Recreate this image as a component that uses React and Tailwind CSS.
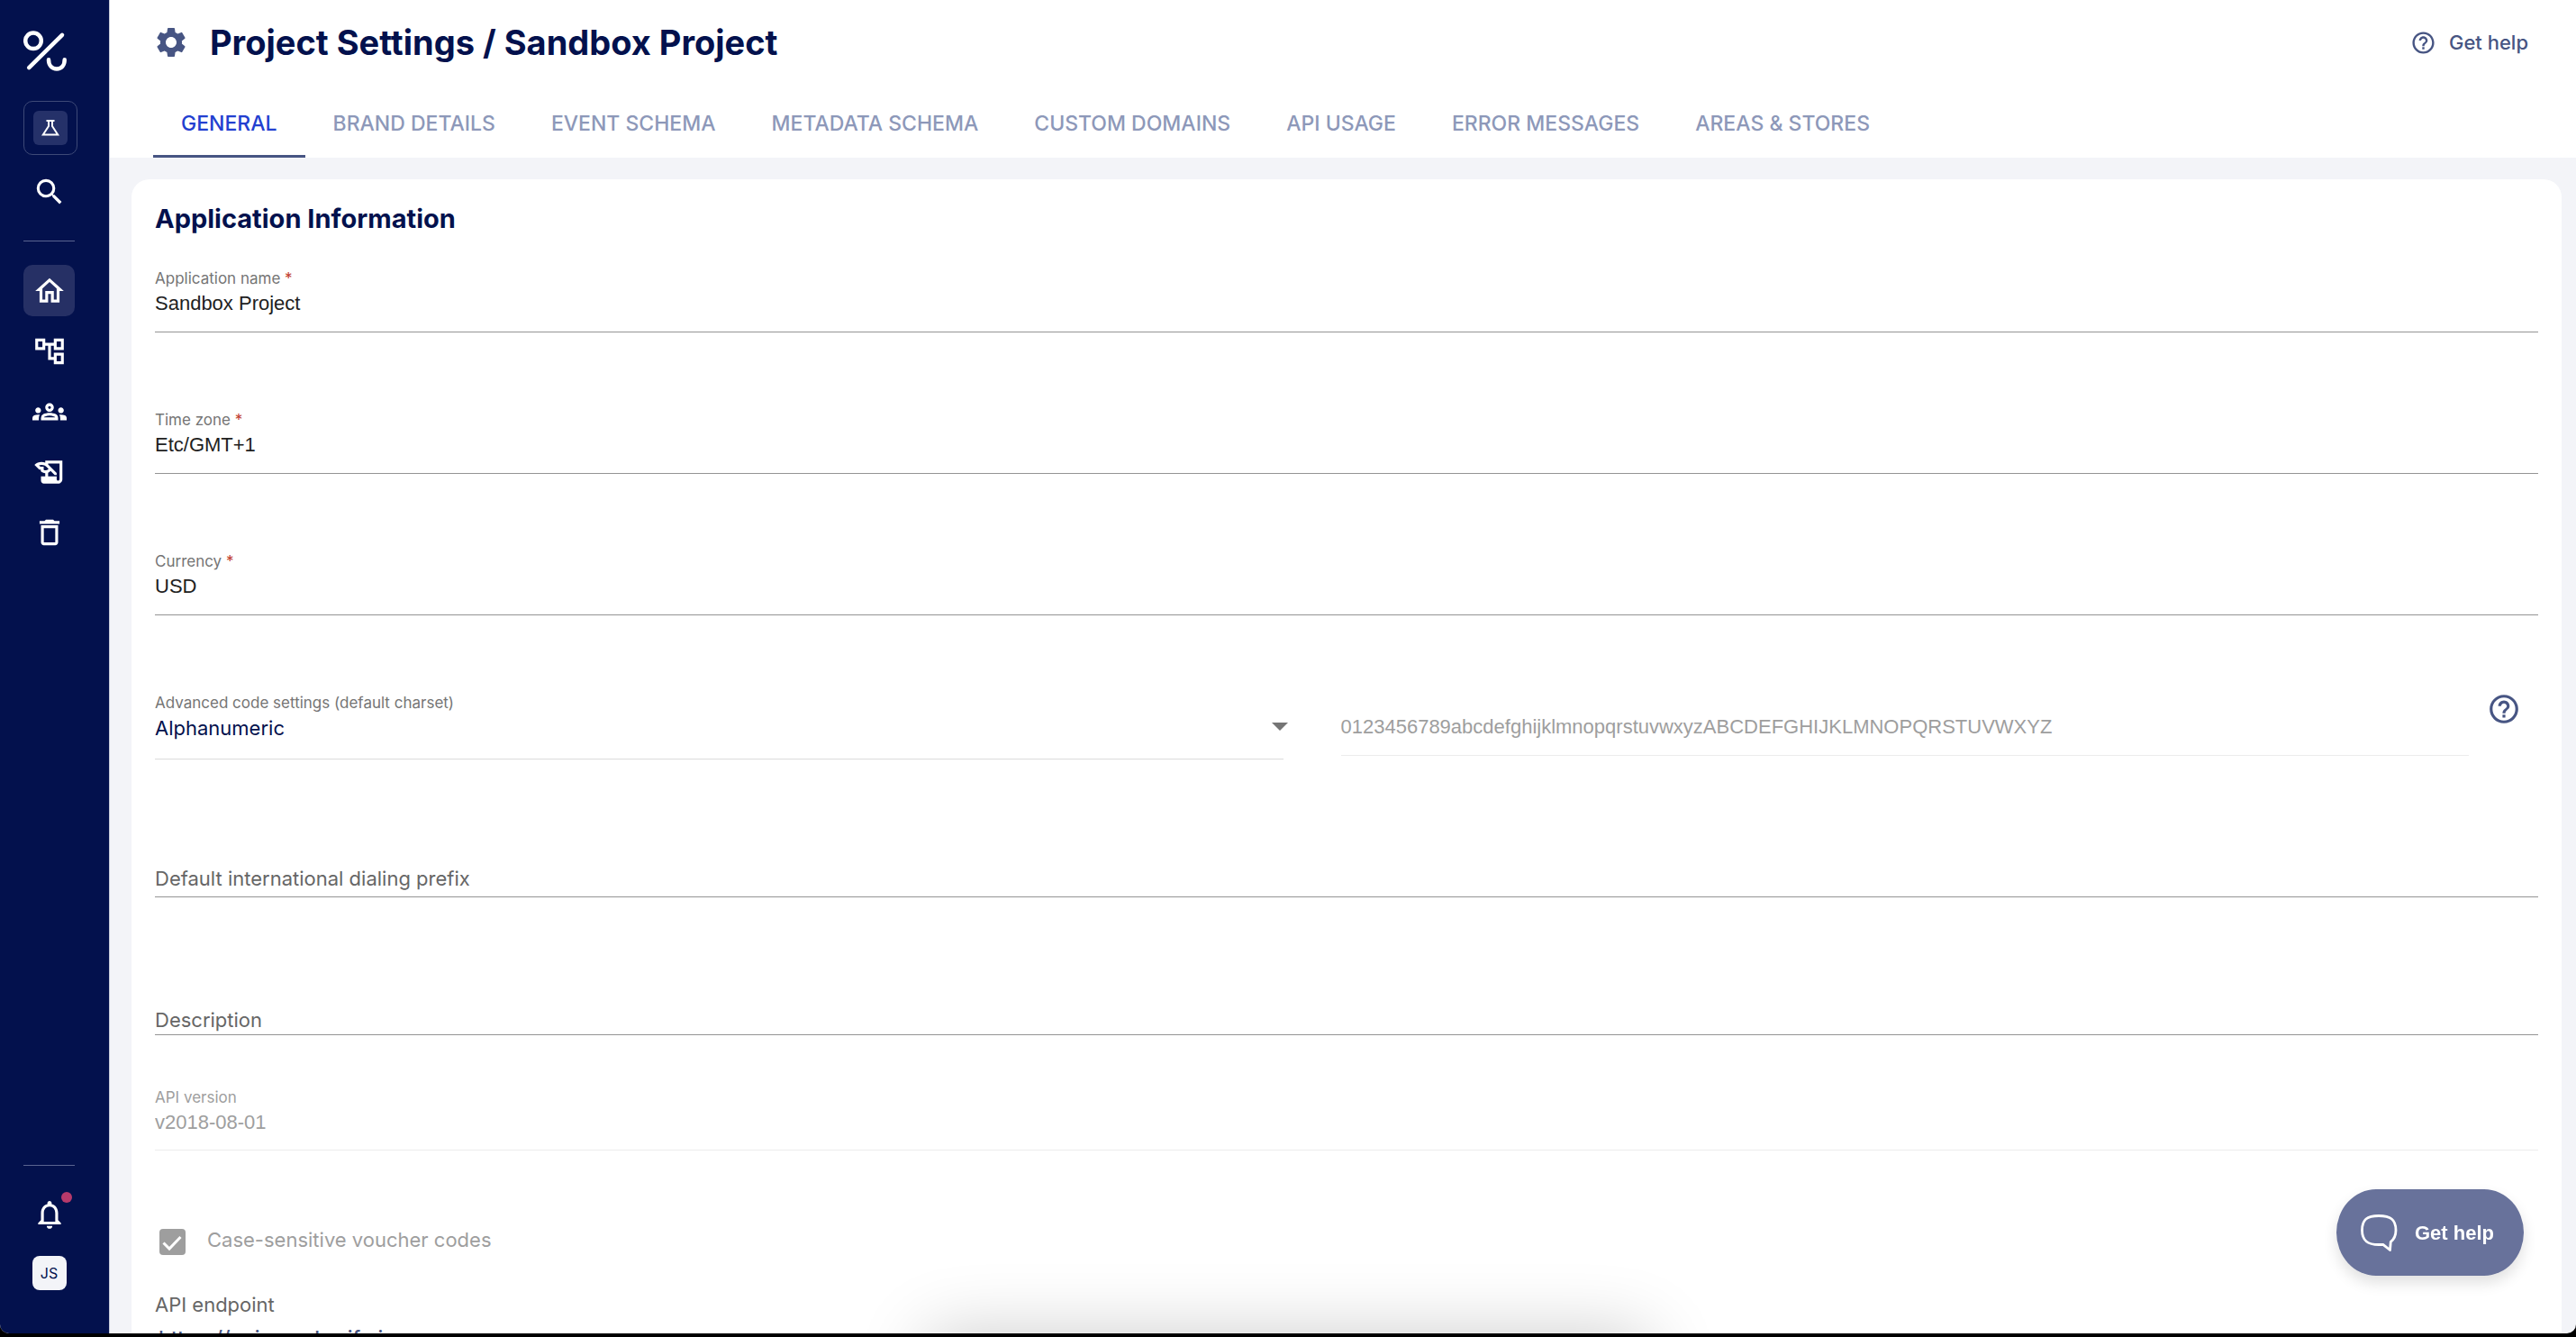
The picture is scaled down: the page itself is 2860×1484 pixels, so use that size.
import React from "react";
import {
  MdSettings,
  MdHelpOutline,
  MdSearch,
  MdOutlineHome,
  MdOutlineAccountTree,
  MdOutlineGroups,
  MdOutlineHistoryEdu,
  MdDeleteOutline,
  MdNotificationsNone,
} from "react-icons/md";

const NAV = [
  { label: "Home", Icon: MdOutlineHome, active: true },
  { label: "Campaigns", Icon: MdOutlineAccountTree },
  { label: "Customers", Icon: MdOutlineGroups },
  { label: "Audit log", Icon: MdOutlineHistoryEdu },
  { label: "Bin", Icon: MdDeleteOutline },
];

const TABS = [
  "GENERAL",
  "BRAND DETAILS",
  "EVENT SCHEMA",
  "METADATA SCHEMA",
  "CUSTOM DOMAINS",
  "API USAGE",
  "ERROR MESSAGES",
  "AREAS & STORES",
];

function Logo() {
  return (
    <svg viewBox="0 0 48 46" className="h-[46px] w-12" fill="none" stroke="#fff" strokeWidth="4.5" strokeLinecap="round" aria-hidden="true">
      <circle cx="11" cy="11.3" r="8.8" />
      <path d="M43 4.800 6.200 41.200" />
      <path d="M28 32.200c0 6.500 3.800 10.200 9 10.200s8.700-3.800 8.700-10.200" />
    </svg>
  );
}

function Flask() {
  return (
    <svg viewBox="0 0 20 20" className="size-5" fill="none" stroke="#fff" strokeWidth="2" aria-hidden="true">
      <path d="M5.500 2h9M8 2v6L1.800 17.500h16.400L12 8V2" />
    </svg>
  );
}

function Sidebar() {
  return (
    <aside className="flex w-[122px] shrink-0 flex-col border-r border-[#c6cad8] bg-[#03114d] pb-12 pl-[26px] text-white">
      <a href="#home" aria-label="Voucherify" className="mt-[34px] block w-12">
        <Logo />
      </a>
      <button aria-label="Sandbox" className="mt-8 flex size-[60px] items-center justify-center rounded-[10px] border border-[#3d4977]">
        <span className="flex size-[38px] items-center justify-center rounded-md bg-[#253169]">
          <Flask />
        </span>
      </button>
      <button aria-label="Search" className="mt-[22px] flex h-[38px] w-[57px] items-center justify-center">
        <MdSearch className="size-[38px]" />
      </button>
      <hr className="mt-[35px] w-[57px] border-[#5a6490]" />
      <nav className="mt-[26px] flex flex-col gap-[10px]">
        {NAV.map(({ label, Icon, active }) => (
          <a
            key={label}
            href="#nav"
            aria-label={label}
            className={
              active
                ? "flex size-[57px] items-center justify-center rounded-[10px] bg-[#263065]"
                : "flex size-[57px] items-center justify-center"
            }
          >
            <Icon className="size-[38px]" />
          </a>
        ))}
      </nav>
      <div className="mt-auto flex w-[57px] flex-col items-center border-t border-[#5a6490] pt-[35px]">
        <button aria-label="Notifications" className="relative">
          <MdNotificationsNone className="size-[38px]" />
          <span className="absolute -top-1.5 -right-1.5 size-3 rounded-full bg-[#b73a6b]" />
        </button>
        <button className="mt-[27px] size-[38px] rounded-lg bg-[#f3f4f8] text-base text-[#03114d]">JS</button>
      </div>
    </aside>
  );
}

function Header() {
  return (
    <header className="bg-white">
      <div className="flex h-[94px] items-center pl-12 pr-[53px]">
        <MdSettings className="size-10 text-[#475583]" />
        <h1 className="ml-[23px] text-[38px] font-bold">Project Settings / Sandbox Project</h1>
        <a href="#help" className="ml-auto flex items-center gap-[14px] text-[22px] font-medium text-[#475583]">
          <MdHelpOutline className="size-[29px]" />
          Get help
        </a>
      </div>
      <nav className="flex pl-12">
        {TABS.map((tab, i) => (
          <a
            key={tab}
            href="#tab"
            className={
              i === 0
                ? "h-[81px] border-b-[3px] border-[#475583] px-[31px] pt-[26px] text-[23px] font-medium text-[#233fd0]"
                : "h-[81px] px-[31px] pt-[26px] text-[23px] font-medium text-[#8d98b9]"
            }
          >
            {tab}
          </a>
        ))}
      </nav>
    </header>
  );
}

function Field({ id, label, value }) {
  return (
    <div className="mb-[85px] flex h-[72px] flex-col border-b border-[#949494]">
      <label htmlFor={id} className="text-[17px] leading-6 text-[#757575]">
        {label} <span className="text-[#c0392b]">*</span>
      </label>
      <input id={id} defaultValue={value} className="w-full font-['Liberation_Sans',sans-serif] text-[22px] leading-8 text-[#212121] outline-none" />
    </div>
  );
}

function CodeSettings() {
  return (
    <div className="flex h-[140px] items-start">
      <div className="relative flex h-[75px] flex-1 flex-col border-b border-[#dcdcdc]">
        <label htmlFor="charset" className="text-[17px] leading-6 text-[#757575]">
          Advanced code settings (default charset)
        </label>
        <select id="charset" className="w-full appearance-none text-[22px] leading-8 text-[#03114d] outline-none">
          <option>Alphanumeric</option>
        </select>
        <svg viewBox="0 0 18 9" className="pointer-events-none absolute top-[34px] -right-[5px] h-[9px] w-[18px] fill-[#757575]" aria-hidden="true">
          <path d="M0 0h18L9 9z" />
        </svg>
      </div>
      <div className="ml-16 flex h-[71px] flex-1 flex-col border-b border-[#ececec] pt-[23px]">
        <input
          aria-label="Charset"
          disabled
          defaultValue="0123456789abcdefghijklmnopqrstuvwxyzABCDEFGHIJKLMNOPQRSTUVWXYZ"
          className="w-full font-['Liberation_Sans',sans-serif] text-[22px] leading-8 text-[#9e9e9e]"
        />
      </div>
      <button aria-label="Charset help" className="mr-[19px] ml-5 text-[#475583]">
        <MdHelpOutline className="size-[38px]" />
      </button>
    </div>
  );
}

function HelpWidget() {
  return (
    <button className="fixed right-[58px] bottom-[68px] flex h-24 w-[208px] items-center rounded-[44px/48px] bg-[#68729b] pl-[26px] font-['Liberation_Sans',sans-serif] text-[22px] font-bold text-white shadow-[0_8px_16px_rgba(0,0,0,0.12)]">
      <svg viewBox="0 0 42 42" className="size-[42px]" fill="none" stroke="#fff" strokeWidth="2.800" strokeLinejoin="round" aria-hidden="true">
        <path d="M21 2.500C8 2.500 2.500 6.500 2.500 18.500S9 34.500 21 34.500c2 0 3.500 0 4.800-.2L33.500 40.500l.8-9.200c4-3 5.700-7.300 5.700-12.800C40 6.500 34 2.500 21 2.500z" />
      </svg>
      <span className="ml-[19px]">Get help</span>
    </button>
  );
}

export default function App() {
  return (
    <div className="h-screen overflow-hidden bg-black pb-1 font-['Inter',sans-serif] text-[#03114d]">
      <div className="relative flex h-full overflow-hidden rounded-b-[10px] bg-[#f3f4f8]">
        <Sidebar />
        <div className="flex min-w-0 flex-1 flex-col">
          <Header />
          <main className="mt-6 mr-4 ml-6 flex-1 overflow-hidden rounded-t-[20px] bg-white px-[26px]">
            <h2 className="mt-6 mb-[34px] text-[29px] leading-10 font-bold">Application Information</h2>
            <form>
              <Field id="name" label="Application name" value="Sandbox Project" />
              <Field id="tz" label="Time zone" value="Etc/GMT+1" />
              <Field id="currency" label="Currency" value="USD" />
              <CodeSettings />
              <input aria-label="Default international dialing prefix" placeholder="Default international dialing prefix" className="mt-[51px] block w-full border-b border-[#949494] pb-1 text-[22px] leading-8 outline-none placeholder:text-[#666] placeholder:opacity-100" />
              <input aria-label="Description" placeholder="Description" className="mt-[120px] block w-full border-b border-[#949494] text-[22px] leading-8 outline-none placeholder:text-[#666] placeholder:opacity-100" />
              <div className="mt-[57px] flex h-[71px] flex-col border-b border-[#ececec]">
                <label htmlFor="version" className="text-[17px] leading-6 text-[#9e9e9e]">API version</label>
                <input id="version" disabled defaultValue="v2018-08-01" className="w-full font-['Liberation_Sans',sans-serif] text-[22px] leading-8 text-[#9e9e9e]" />
              </div>
              <label className="mt-[83px] flex items-start gap-6 pl-[5px] text-[22px] leading-8 text-[#9e9e9e]">
                <span className="relative mt-1 block size-[29px]">
                  <input type="checkbox" disabled defaultChecked className="block size-[29px] appearance-none rounded-sm bg-[#9e9e9e]" />
                  <svg viewBox="0 0 29 29" className="absolute inset-0 size-[29px]" fill="none" stroke="#fff" strokeWidth="3" aria-hidden="true">
                    <path d="M4.500 15.500l6.500 6.500L23.500 9" />
                  </svg>
                </span>
                Case-sensitive voucher codes
              </label>
              <p className="mt-[39px] text-[22px] leading-8 text-[#666]">API endpoint</p>
              <a href="#endpoint" className="mt-1 block pl-1 text-[23px] leading-9 font-medium text-[#475583]">https://api.voucherify.io</a>
            </form>
          </main>
        </div>
        <div className="pointer-events-none absolute -bottom-24 left-1/2 h-24 w-[800px] -translate-x-1/2 shadow-[0_0_80px_rgba(0,0,0,0.2)]" />
      </div>
      <HelpWidget />
    </div>
  );
}
